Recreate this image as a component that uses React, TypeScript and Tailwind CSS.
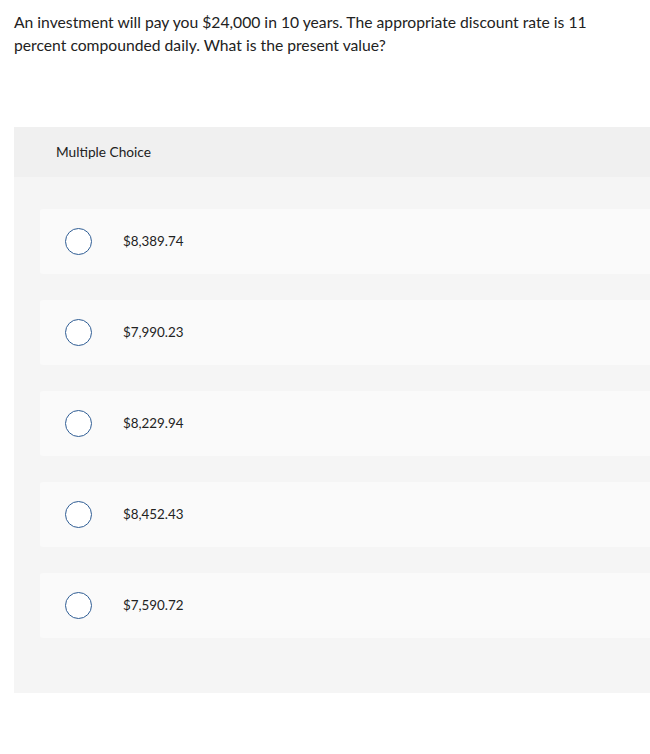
const choices = ['$8,389.74', '$7,990.23', '$8,229.94', '$8,452.43', '$7,590.72'];

export default function App() {
  return (
    <div className="h-[754px] w-[650px] overflow-hidden bg-white text-[#222]" style={{ fontFamily: 'Lato, "Open Sans", sans-serif' }}>
      <p className="ml-[14px] mt-[11px] w-[620px] text-[15.7px] leading-[23px]">
        An investment will pay you $24,000 in 10 years. The appropriate discount rate is 11 percent compounded daily. What is the present value?
      </p>

      <div className="ml-[14px] mt-[70px] w-[660px] bg-[#f5f5f5]">
        <div className="flex h-[50px] items-center bg-[#f0f0f0] pl-[42px] text-[13.7px]">Multiple Choice</div>
        <div className="flex flex-col gap-[26px] pb-[55px] pl-[26px] pt-[32px]">
          {choices.map((c) => (
            <div key={c} className="flex h-[65px] items-center rounded-l-[3px] bg-[#fafafa]">
              <span className="ml-[25px] h-[27px] w-[27px] rounded-full border border-[#2f5d94] bg-white" />
              <span className="ml-[31px] text-[13.4px]">{c}</span>
            </div>
          ))}
        </div>
      </div>
    </div>
  );
}
